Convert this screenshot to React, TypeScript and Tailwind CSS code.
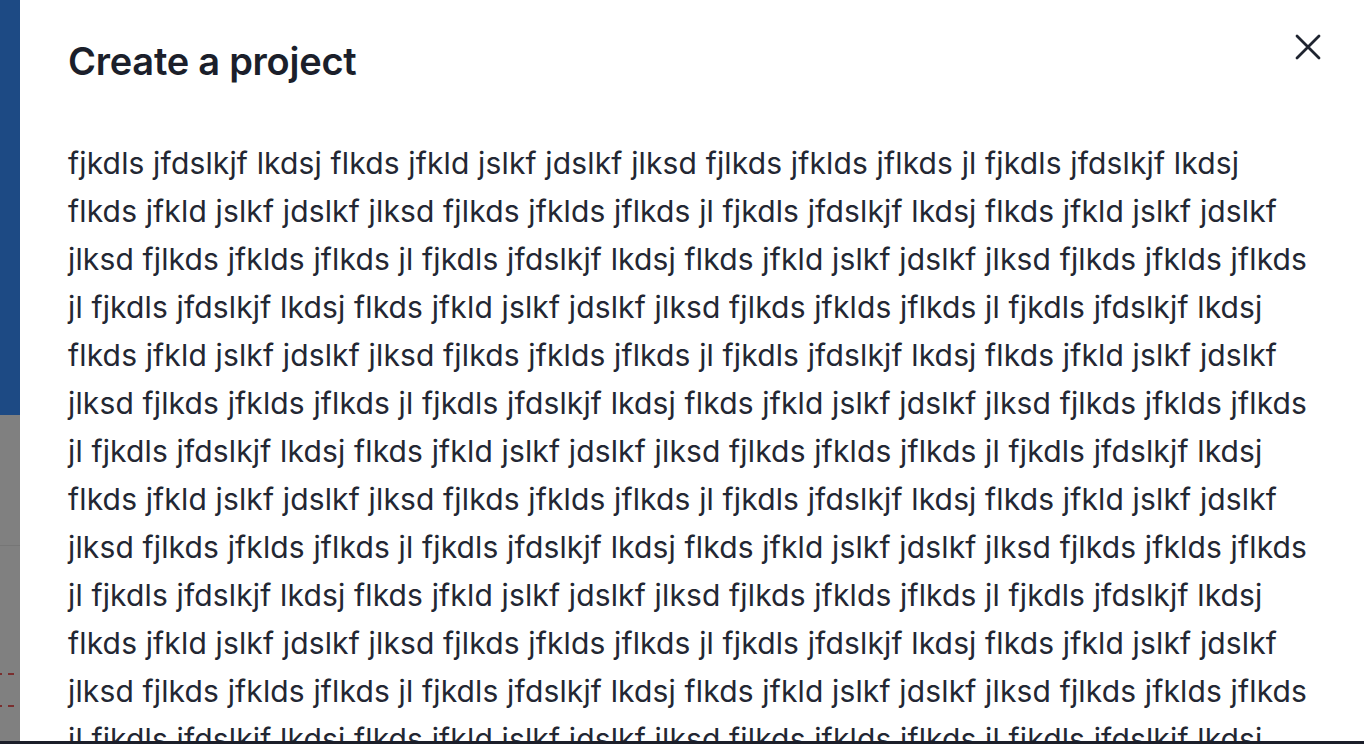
import React from "react";

const L1 = "fjkdls jfdslkjf lkdsj flkds jfkld jslkf jdslkf jlksd fjlkds jfklds jflkds jl fjkdls jfdslkjf lkdsj";
const L2 = "flkds jfkld jslkf jdslkf jlksd fjlkds jfklds jflkds jl fjkdls jfdslkjf lkdsj flkds jfkld jslkf jdslkf";
const L3 = "jlksd fjlkds jfklds jflkds jl fjkdls jfdslkjf lkdsj flkds jfkld jslkf jdslkf jlksd fjlkds jfklds jflkds";
const L4 = "jl fjkdls jfdslkjf lkdsj flkds jfkld jslkf jdslkf jlksd fjlkds jfklds jflkds jl fjkdls jfdslkjf lkdsj";
const lines = [L1, L2, L3, L4, L2, L3, L4, L2, L3, L4, L2, L3, L4, L2];

export default function App() {
  return (
    <div className="w-[1364px] h-[744px] flex flex-col overflow-hidden bg-[#1b1e29]" style={{ fontFamily: "Inter, 'Noto Sans', sans-serif" }}>
      <div className="flex flex-1 min-h-0 bg-white">
        <div className="w-[20px] flex flex-col">
          <div className="h-[415px] bg-[#1d4a84]" />
          <div className="flex-1 bg-[#808080] flex flex-col">
            <div className="h-[130px]" />
            <div className="h-px bg-[#767676]" />
            <div className="h-[127px]" />
            <div className="flex gap-[6px] h-[2px]">
              <div className="w-[2px] bg-[#7a2e2e]" />
              <div className="w-[6px] bg-[#7a2e2e]" />
            </div>
            <div className="h-[30px]" />
            <div className="flex gap-[6px] h-[2px]">
              <div className="w-[2px] bg-[#7a2e2e]" />
              <div className="w-[6px] bg-[#7a2e2e]" />
            </div>
          </div>
        </div>
        <div className="flex-1 bg-white rounded-br-[8px] rounded-bl-[8px] overflow-hidden flex flex-col">
          <div className="flex items-start justify-between pl-[48px] pr-[42px] pt-[38px]">
            <h2 className="text-[38px] leading-[46px] font-semibold text-[#1b1f2b] tracking-[-0.25px]">Create a project</h2>
            <button className="mt-[-5px] w-[28px] h-[28px] flex items-center justify-center text-[#1f2430]">
              <svg width="28" height="28" viewBox="0 0 28 28" fill="none" stroke="currentColor" strokeWidth="2.8" strokeLinecap="round">
                <path d="M3 3 L25 25 M25 3 L3 25" />
              </svg>
            </button>
          </div>
          <p className="mt-[55px] pl-[48px] pr-[40px] text-[30px] leading-[48px] tracking-[0.15px] text-[#232733] whitespace-nowrap">
            {lines.map((l, i) => (
              <span key={i} className="block">{l}</span>
            ))}
          </p>
        </div>
      </div>
      <div className="h-[3px]" />
    </div>
  );
}
